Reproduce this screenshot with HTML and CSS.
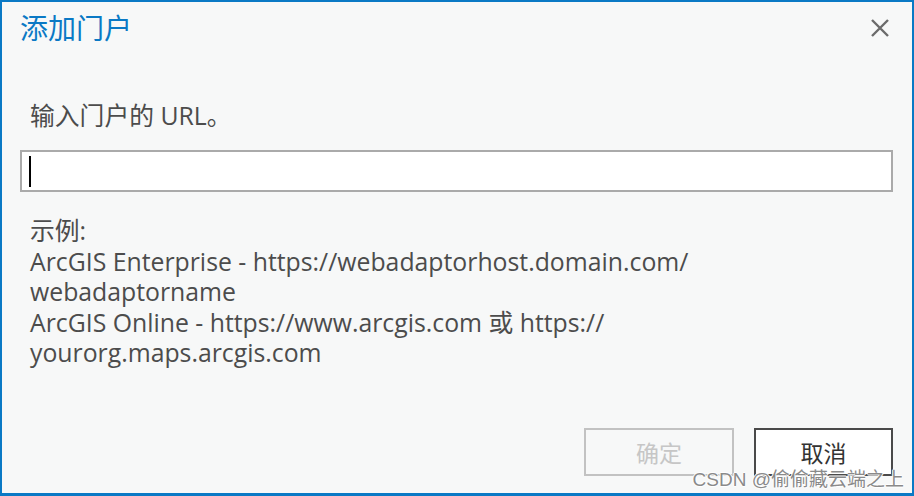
FILE: index.html
```html
<!DOCTYPE html>
<html lang="zh-CN">
<head>
<meta charset="utf-8">
<title>添加门户</title>
<link rel="stylesheet" href="styles.css">
</head>
<body>
<div class="dialog">
  <div class="header">
    <h1 class="title">添加门户</h1>
    <button class="close" aria-label="关闭">
      <svg width="20" height="18" viewBox="0 0 20 18"><path d="M2 1 L18 17 M18 1 L2 17" stroke="#6b6b6b" stroke-width="2.4" fill="none"/></svg>
    </button>
  </div>
  <div class="body">
    <p class="prompt">输入门户的 URL。</p>
    <div class="input"><span class="caret"></span></div>
    <div class="examples">
      <div>示例:</div>
      <div>ArcGIS Enterprise - https://webadaptorhost.domain.com/</div>
      <div>webadaptorname</div>
      <div>ArcGIS Online - https://www.arcgis.com 或 https://</div>
      <div>yourorg.maps.arcgis.com</div>
    </div>
  </div>
  <div class="footer">
    <button class="btn btn-disabled">确定</button>
    <button class="btn btn-cancel">取消</button>
  </div>
  <div class="watermark">CSDN @偷偷藏云端之上</div>
</div>
</body>
</html>
```

FILE: styles.css
```css
html, body {
  margin: 0;
  padding: 0;
}
body {
  width: 914px;
  height: 496px;
  overflow: hidden;
  background: #f7f8f8;
}
.dialog {
  position: relative;
  box-sizing: border-box;
  width: 914px;
  height: 496px;
  border: 2px solid #0a79c5;
  border-bottom-width: 3px;
  background: #f7f8f8;
  font-family: "Open Sans", "Noto Sans CJK SC", sans-serif;
  color: #4c4c4c;
  display: flex;
  flex-direction: column;
}
.header {
  display: flex;
  justify-content: space-between;
  align-items: flex-start;
  padding: 7px 22px 0 18px;
  height: 58px;
  box-sizing: border-box;
}
.title {
  margin: 0;
  font-family: "Noto Sans CJK SC", sans-serif;
  font-weight: 400;
  font-size: 28px;
  line-height: 36px;
  color: #0a79c5;
}
.close {
  margin-top: 10px;
  border: 0;
  padding: 0;
  background: transparent;
  width: 20px;
  height: 18px;
  display: flex;
}
.body {
  padding: 0 19px 0 18px;
  flex: 1;
}
.prompt {
  margin: 40px 0 0 10px;
  font-size: 24.8px;
  line-height: 30px;
}
.input {
  margin-top: 20px;
  height: 42px;
  box-sizing: border-box;
  border: 2px solid #aaaaaa;
  background: #ffffff;
  display: flex;
  align-items: center;
  padding-left: 7px;
}
.caret {
  width: 2px;
  height: 31px;
  background: #000;
}
.examples {
  margin: 23px 0 0 10px;
  font-size: 24.8px;
  line-height: 30.5px;
}
.footer {
  display: flex;
  justify-content: flex-end;
  gap: 20px;
  padding: 0 19px 17px 0;
}
.btn {
  width: 150px;
  height: 48px;
  box-sizing: border-box;
  font-family: "Noto Sans CJK SC", sans-serif;
  font-size: 23px;
  background: transparent;
  padding: 0;
}
.btn-disabled {
  border: 2px solid #c2c2c2;
  color: #c6c6c6;
}
.btn-cancel {
  width: 139px;
  border: 2px solid #4a4a4a;
  background: #ffffff;
  color: #333333;
}
.watermark {
  position: absolute;
  right: 8px;
  bottom: 2px;
  font-family: "Liberation Sans", "Noto Sans CJK SC", sans-serif;
  font-size: 19px;
  color: #8a8a8a;
  text-shadow: -1px 0 #fff, 1px 0 #fff, 0 -1px #fff, 0 1px #fff;
}
```
